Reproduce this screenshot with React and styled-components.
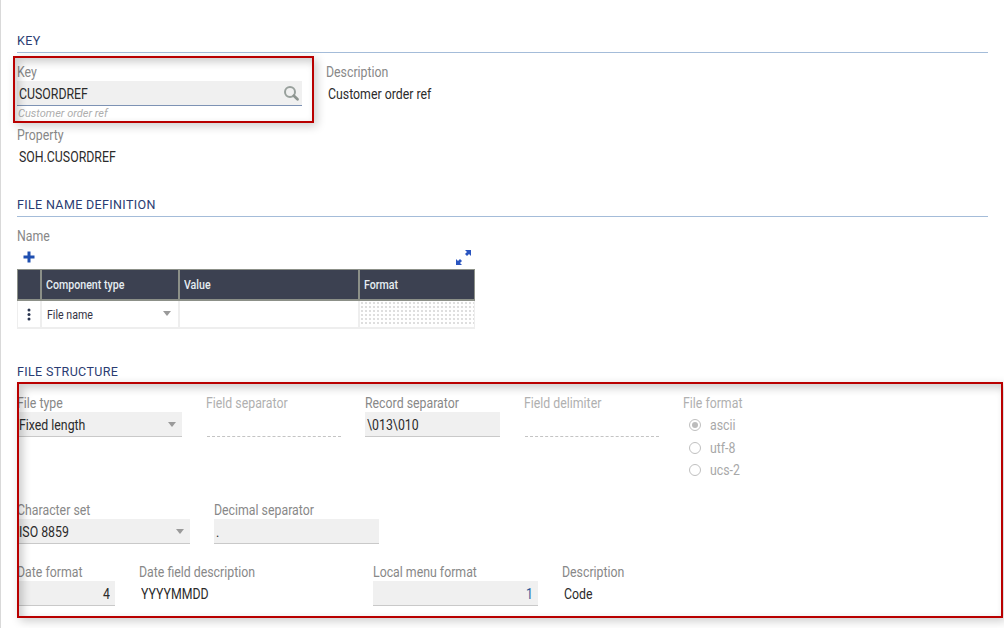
import React from "react";
import styled, { createGlobalStyle } from "styled-components";

const GlobalStyle = createGlobalStyle`
  html, body {
    margin: 0;
    padding: 0;
    background: #ffffff;
    font-family: Roboto, "Liberation Sans", sans-serif;
    overflow: hidden;
  }
`;

const Page = styled.div`
  position: relative;
  box-sizing: border-box;
  width: 1004px;
  height: 628px;
  overflow: hidden;
  border-left: 1px solid #d9d9d9;
  padding: 32px 16px 0 16px;
`;

const Heading = styled.div`
  box-sizing: border-box;
  height: 21px;
  line-height: 17px;
  font-size: 12.5px;
  letter-spacing: 0.35px;
  color: #2a3c72;
  margin-top: ${(props) => props.$top || 0}px;
  border-bottom: ${(props) => (props.$plain ? "none" : "1px solid #a4bcd9")};
`;

const Row = styled.div`
  display: flex;
  gap: 24px;
  margin-top: ${(props) => props.$top || 0}px;
  min-height: ${(props) => props.$minHeight || 0}px;
`;

const Field = styled.div`
  width: ${(props) => props.$width}px;
  flex: none;
`;

/* the source font is narrower than Roboto, so text is squeezed sideways */
const Squeezed = styled.span`
  display: inline-block;
  white-space: nowrap;
  transform: scaleX(${(props) => props.$scale || 0.88});
  transform-origin: ${(props) => (props.$right ? "right" : "left")} center;
`;

const Label = styled.div`
  height: 18px;
  line-height: 19px;
  font-size: 14px;
  color: ${(props) => (props.$disabled ? "#b0b0b0" : "#888888")};
  white-space: nowrap;
  transform: scaleX(0.88);
  transform-origin: left center;
`;

const Input = styled.div`
  box-sizing: border-box;
  height: 25px;
  display: flex;
  align-items: center;
  justify-content: ${(props) => (props.$number ? "flex-end" : "space-between")};
  padding: 2px ${(props) => (props.$number ? "5px" : "2px")} 0;
  background: #f0f0f0;
  border-bottom: 1px solid ${(props) => (props.$focus ? "#7d92b4" : "#c9c9c9")};
  font-size: 14px;
  color: ${(props) => props.$color || "#2b2b2b"};
`;

const DashedInput = styled.div`
  height: 25px;
  box-sizing: border-box;
  margin-left: 1px;
  border-bottom: 1px dashed #c4c4c4;
`;

const Plain = styled.div`
  height: 25px;
  line-height: 26px;
  padding-left: 2px;
  font-size: 14px;
  color: #2b2b2b;
`;

const Helper = styled.div`
  height: 20px;
  line-height: 15px;
  padding-left: 1px;
  font-size: 11px;
  font-style: italic;
  color: #aeaeae;
`;

const Caret = styled.span`
  width: 0;
  height: 0;
  margin: 0 4.5px 2px 0;
  border-left: 4.5px solid transparent;
  border-right: 4.5px solid transparent;
  border-top: 5px solid #9a9a9a;
`;

const Toolbar = styled.div`
  width: 458px;
  height: 24px;
  display: flex;
  align-items: center;
  justify-content: space-between;
  padding: 0 4px 1px 6px;
  box-sizing: border-box;
`;

const Table = styled.div`
  width: 458px;
  display: grid;
  grid-template-columns: 25px 138px 180px 115px;
`;

const HeadCell = styled.div`
  box-sizing: border-box;
  height: 32px;
  line-height: 30px;
  padding-left: 4px;
  background: #3c4151;
  border-top: 1px solid #8c9088;
  border-bottom: 2px solid #8c9088;
  border-right: ${(props) => (props.$last ? 1 : 2)}px solid #8c9088;
  border-left: ${(props) => (props.$first ? "1px solid #8c9088" : "none")};
  font-size: 12.5px;
  font-weight: 500;
  color: #e6edf2;
`;

const BodyCell = styled.div`
  box-sizing: border-box;
  height: 28px;
  display: flex;
  align-items: center;
  justify-content: ${(props) => (props.$center ? "center" : "space-between")};
  padding: 0 ${(props) => (props.$center ? 0 : 3)}px 0 ${(props) => (props.$center ? 0 : 5)}px;
  border-right: ${(props) => (props.$last ? 1 : 2)}px solid #eeeeee;
  border-bottom: 2px solid #eeeeee;
  border-left: ${(props) => (props.$first ? "1px solid #eeeeee" : "none")};
  font-size: 12.5px;
  color: #333344;
`;

const DottedCell = styled(BodyCell)`
  padding: 0 0 2px 0;
  background-image: radial-gradient(#dcdcdc 0.7px, transparent 0.8px);
  background-size: 4px 4px;
  background-clip: content-box;
  background-origin: content-box;
`;

const RadioGroup = styled.div`
  display: flex;
  flex-direction: column;
  padding: 2px 0 0 6px;
`;

const RadioRow = styled.div`
  height: 22.5px;
  display: flex;
  align-items: center;
  gap: 9px;
  font-size: 14px;
  color: #a8a8a8;
`;

const RadioMark = styled.span`
  box-sizing: border-box;
  width: 12px;
  height: 12px;
  border-radius: 50%;
  border: 1px solid #c0c0c0;
  display: flex;
  align-items: center;
  justify-content: center;

  &::after {
    content: "";
    width: 6px;
    height: 6px;
    border-radius: 50%;
    background: ${(props) => (props.$checked ? "#bcbcbc" : "transparent")};
  }
`;

const Callout = styled.div`
  position: absolute;
  box-sizing: border-box;
  left: ${(props) => props.$left}px;
  top: ${(props) => props.$top}px;
  width: ${(props) => props.$width}px;
  height: ${(props) => props.$height}px;
  border: 2px solid #b90000;
  box-shadow: 3px 3px 9px rgba(0, 0, 0, 0.2), inset 4px 4px 8px rgba(0, 0, 0, 0.2);
  pointer-events: none;
`;

const SearchSvg = styled.svg`
  margin-bottom: 2px;
`;

const SearchIcon = () => (
  <SearchSvg width="17" height="17" viewBox="0 0 17 17" fill="none">
    <circle cx="7" cy="7" r="5" stroke="#98a09c" strokeWidth="2" />
    <path d="M10.8 10.8 L14.5 14.2" stroke="#8d9490" strokeWidth="2.8" strokeLinecap="round" />
  </SearchSvg>
);

const PlusIcon = () => (
  <svg width="12" height="12" viewBox="0 0 12 12">
    <path d="M4.5 0.5h3v4h4v3h-4v4h-3v-4h-4v-3h4z" fill="#1f4fb0" />
  </svg>
);

const ExpandIcon = () => (
  <svg width="15" height="16" viewBox="0 0 15 16">
    <path d="M9 1h6v6l-2-2-2 2-2-2 2-2z" fill="#2a55c0" />
    <path d="M0 16v-6l2 2 2-2 2 2-2 2 2 2z" fill="#2a55c0" />
  </svg>
);

const KebabIcon = () => (
  <svg width="4" height="13" viewBox="0 0 4 13">
    <circle cx="2" cy="2" r="1.5" fill="#2a3550" />
    <circle cx="2" cy="6.5" r="1.5" fill="#2a3550" />
    <circle cx="2" cy="11" r="1.5" fill="#2a3550" />
  </svg>
);

const App = () => {
  return (
    <Page>
      <GlobalStyle />
      <Heading>KEY</Heading>
      <Row $top={10}>
        <Field $width={285}>
          <Label>Key</Label>
          <Input $focus>
            <Squeezed>CUSORDREF</Squeezed>
            <SearchIcon />
          </Input>
          <Helper>Customer order ref</Helper>
        </Field>
        <Field $width={200}>
          <Label>Description</Label>
          <Plain><Squeezed>Customer order ref</Squeezed></Plain>
        </Field>
      </Row>
      <Field $width={285}>
        <Label>Property</Label>
        <Plain><Squeezed>SOH.CUSORDREF</Squeezed></Plain>
      </Field>

      <Heading $top={27}>FILE NAME DEFINITION</Heading>
      <Row $top={10}>
        <Field $width={285}>
          <Label>Name</Label>
        </Field>
      </Row>
      <Toolbar>
        <PlusIcon />
        <ExpandIcon />
      </Toolbar>
      <Table>
        <HeadCell $first />
        <HeadCell><Squeezed $scale={0.85}>Component type</Squeezed></HeadCell>
        <HeadCell><Squeezed $scale={0.85}>Value</Squeezed></HeadCell>
        <HeadCell $last><Squeezed $scale={0.85}>Format</Squeezed></HeadCell>
        <BodyCell $first $center>
          <KebabIcon />
        </BodyCell>
        <BodyCell>
          <Squeezed $scale={0.85}>File name</Squeezed>
          <Caret />
        </BodyCell>
        <BodyCell />
        <DottedCell $last />
      </Table>

      <Heading $top={34} $plain>FILE STRUCTURE</Heading>
      <Row $top={10} $minHeight={87}>
        <Field $width={165}>
          <Label>File type</Label>
          <Input>
            <Squeezed>Fixed length</Squeezed>
            <Caret />
          </Input>
        </Field>
        <Field $width={135}>
          <Label $disabled>Field separator</Label>
          <DashedInput />
        </Field>
        <Field $width={135}>
          <Label>Record separator</Label>
          <Input><Squeezed>\013\010</Squeezed></Input>
        </Field>
        <Field $width={135}>
          <Label $disabled>Field delimiter</Label>
          <DashedInput />
        </Field>
        <Field $width={135}>
          <Label $disabled>File format</Label>
          <RadioGroup>
            <RadioRow>
              <RadioMark $checked />
              <Squeezed>ascii</Squeezed>
            </RadioRow>
            <RadioRow>
              <RadioMark />
              <Squeezed>utf-8</Squeezed>
            </RadioRow>
            <RadioRow>
              <RadioMark />
              <Squeezed>ucs-2</Squeezed>
            </RadioRow>
          </RadioGroup>
        </Field>
      </Row>
      <Row $top={19.5}>
        <Field $width={173}>
          <Label>Character set</Label>
          <Input>
            <Squeezed>ISO 8859</Squeezed>
            <Caret />
          </Input>
        </Field>
        <Field $width={165}>
          <Label>Decimal separator</Label>
          <Input><Squeezed>.</Squeezed></Input>
        </Field>
      </Row>
      <Row $top={19}>
        <Field $width={98}>
          <Label>Date format</Label>
          <Input $number><Squeezed $right>4</Squeezed></Input>
        </Field>
        <Field $width={210}>
          <Label>Date field description</Label>
          <Plain><Squeezed>YYYYMMDD</Squeezed></Plain>
        </Field>
        <Field $width={165}>
          <Label>Local menu format</Label>
          <Input $number $color="#2a5a9a"><Squeezed $right>1</Squeezed></Input>
        </Field>
        <Field $width={100}>
          <Label>Description</Label>
          <Plain><Squeezed>Code</Squeezed></Plain>
        </Field>
      </Row>

      <Callout $left={12} $top={56} $width={301} $height={67} />
      <Callout $left={16} $top={382} $width={986} $height={236} />
    </Page>
  );
};

export default App;
